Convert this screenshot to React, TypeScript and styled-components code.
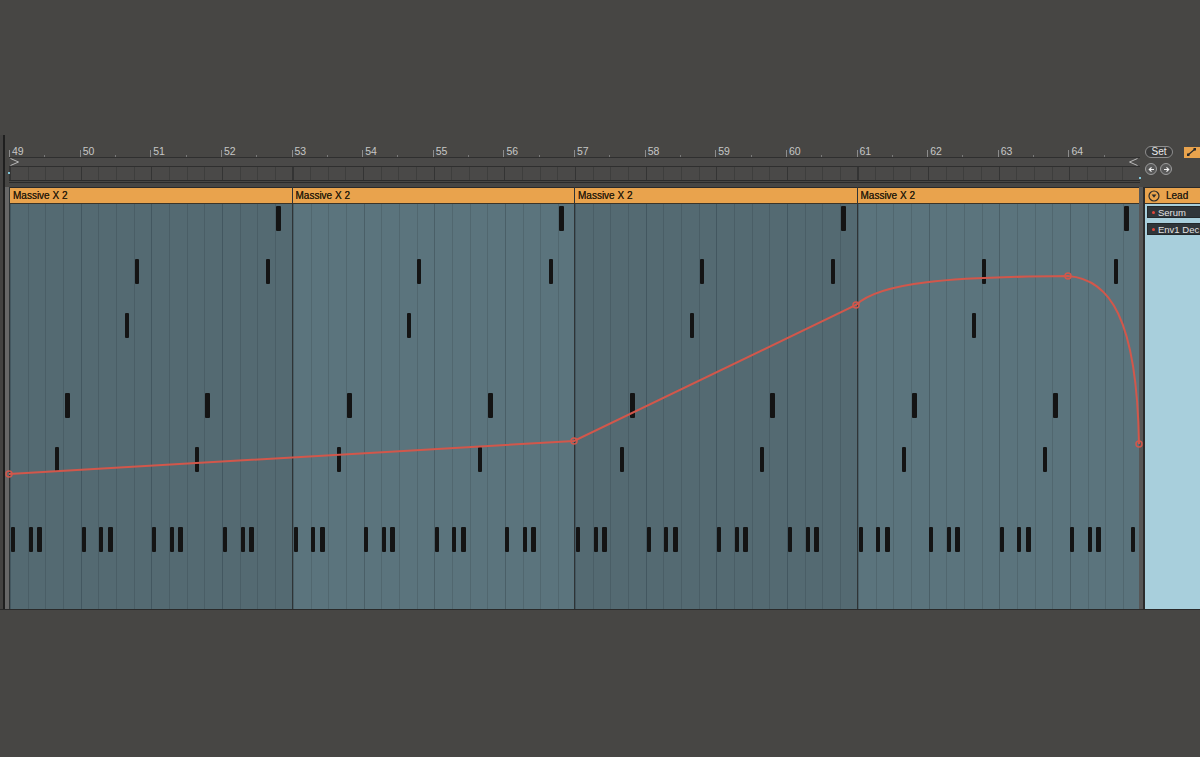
import React from 'react';
import styled, { createGlobalStyle } from 'styled-components';

const BAR_WIDTH = 70.625;
const BEAT_WIDTH = BAR_WIDTH / 4;
const ROW_TOP = [2, 55, 109, 189, 243, 323];

type Note = { x: number; row: number; w: number };
type Clip = { name: string; shade: 'dark' | 'light'; extra?: Note[] };

const baseNotes: Note[] = [
    { x: 266, row: 0, w: 5 },
    { x: 124.5, row: 1, w: 4 },
    { x: 256, row: 1, w: 4 },
    { x: 114.5, row: 2, w: 4 },
    { x: 54.5, row: 3, w: 5 },
    { x: 195, row: 3, w: 5 },
    { x: 44.5, row: 4, w: 4 },
    { x: 185, row: 4, w: 4 },
    ...[0, 1, 2, 3].flatMap((b) => [
        { x: b * BAR_WIDTH + 1, row: 5, w: 4 },
        { x: b * BAR_WIDTH + 18.7, row: 5, w: 4 },
        { x: b * BAR_WIDTH + 27, row: 5, w: 5 },
    ]),
];

const clips: Clip[] = [
    { name: 'Massive X 2', shade: 'dark' },
    { name: 'Massive X 2', shade: 'light' },
    { name: 'Massive X 2', shade: 'dark' },
    { name: 'Massive X 2', shade: 'light', extra: [{ x: 273.5, row: 5, w: 4 }] },
];

const bars = Array.from({ length: 16 }, (_, i) => 49 + i);

// automation breakpoints in lane coords (lane starts at x 9, y 187)
const autoPoints = [
    [0, 287],
    [565, 254],
    [847, 118],
    [1059, 89],
    [1130, 257],
];

const autoPath = 'M0,287 L565,254 L847,118 C871,95 941,90 1059,89 C1100,92 1128,130 1130,257';

const GlobalStyle = createGlobalStyle`
    html, body {
        margin: 0;
        padding: 0;
        background: #474644;
        overflow: hidden;
    }
    body {
        font-family: "Liberation Sans", Arial, sans-serif;
    }
`;

const Page = styled.div`
    width: 1200px;
    height: 757px;
    padding-top: 135px;
    box-sizing: border-box;
    display: flex;
    flex-direction: column;
    background: #474644;
`;

const RulerRow = styled.div`
    display: flex;
    height: 52px;
`;

const LaneRow = styled.div`
    display: flex;
    height: 423px;
`;

const EdgeStrip = styled.div<{ $lit?: boolean }>`
    width: 9px;
    flex-shrink: 0;
    background: linear-gradient(
        to right,
        #434241 0 3px,
        #1f1f1f 3px 5px,
        ${(p) => (p.$lit ? '#676767' : '#474644')} 5px 9px
    );
    ${(p) => p.$lit && 'border-bottom: 1px solid #2a2a2a; box-sizing: border-box;'}
`;

const RulerTrack = styled.div`
    width: 1133px;
    display: flex;
    flex-direction: column;
`;

const Numbers = styled.div`
    height: 22px;
    width: 1130px;
    display: flex;
`;

const BarCell = styled.div`
    flex: 1;
    position: relative;
    display: flex;
    align-items: flex-end;
    padding-left: 3px;
    padding-bottom: 1px;
    font-size: 10.5px;
    line-height: 10px;
    color: #c6c6c6;

    &::before {
        content: '';
        position: absolute;
        left: 0;
        bottom: 0;
        width: 1px;
        height: 7px;
        background: #8c8c8c;
    }

    &::after {
        content: '';
        position: absolute;
        left: 50%;
        bottom: 0;
        width: 1px;
        height: 2px;
        background: #7a7a7a;
    }
`;

const LoopStrip = styled.div`
    height: 8px;
    border-top: 1px solid #2f2f2f;
    border-bottom: 1px solid #2f2f2f;
    display: flex;
    justify-content: space-between;
    align-items: center;
    padding-left: 1px;
    background: #4a4948;
`;

const BeatStrip = styled.div`
    height: 13px;
    border-bottom: 1px solid #2b2b2b;
    background-color: #4a4948;
    background-image: repeating-linear-gradient(
            to right,
            #343434 0 1px,
            transparent 1px ${BAR_WIDTH}px
        ),
        repeating-linear-gradient(to right, #3e3e3d 0 1px, transparent 1px ${BEAT_WIDTH}px);
    background-position: 1px 0;
    position: relative;
`;

const Marker = styled.span<{ $right?: boolean }>`
    position: absolute;
    bottom: ${(p) => (p.$right ? '1px' : '6px')};
    ${(p) => (p.$right ? 'left: 1130px;' : 'left: -1px;')}
    width: 2px;
    height: 2px;
    background: #7fc4d8;
`;

const RulerGap = styled.div`
    margin-top: 1px;
    height: 4px;
    border-top: 1px solid #2b2b2b;
`;

const Controls = styled.div`
    margin-left: 3px;
    width: 55px;
    padding: 11px 0 0 2px;
    display: flex;
    flex-direction: column;
    gap: 5px;
    overflow: hidden;
`;

const ControlRow = styled.div<{ $gap: number }>`
    display: flex;
    align-items: center;
    gap: ${(p) => p.$gap}px;
`;

const SetButton = styled.div`
    width: 28px;
    height: 12px;
    box-sizing: border-box;
    border: 1px solid #8e8e8e;
    border-radius: 6px;
    background: #3a3a3a;
    color: #e8e8e8;
    font-size: 10px;
    line-height: 10px;
    text-align: center;
`;

const OrangeToggle = styled.div`
    width: 16px;
    height: 11px;
    flex-shrink: 0;
    background: #e9a34d;
    display: flex;
    align-items: center;
    padding-left: 3px;
    box-sizing: border-box;
`;

const RoundButton = styled.div`
    width: 12px;
    height: 12px;
    box-sizing: border-box;
    border-radius: 50%;
    border: 1px solid #9c9c9c;
    background: #585858;
    display: flex;
    align-items: center;
    justify-content: center;
`;

const Lane = styled.div`
    width: 1130px;
    display: flex;
    position: relative;
    border-bottom: 1px solid #2a2a2a;
    box-sizing: border-box;
`;

const ClipBox = styled.div`
    flex: 1;
    display: flex;
    flex-direction: column;
    border-left: 1px solid #2f3436;
    min-width: 0;
`;

const ClipHeader = styled.div`
    height: 15px;
    border-top: 1px solid #2a2a2a;
    border-bottom: 1px solid #3a3428;
    background: #e9a34d;
    color: #2c1f0c;
    font-size: 10px;
    line-height: 15px;
    padding-left: 3px;
    white-space: nowrap;
    overflow: hidden;
    text-shadow: 0 0 0.4px #2c1f0c;
`;

const ClipBody = styled.div<{ $shade: 'dark' | 'light' }>`
    flex: 1;
    position: relative;
    background-color: ${(p) => (p.$shade === 'dark' ? '#546a72' : '#5b747d')};
    background-image: repeating-linear-gradient(
            to right,
            ${(p) => (p.$shade === 'dark' ? '#435760' : '#4a5f67')} 0 1px,
            transparent 1px ${BAR_WIDTH}px
        ),
        repeating-linear-gradient(
            to right,
            ${(p) => (p.$shade === 'dark' ? '#4a5e66' : '#51676f')} 0 1px,
            transparent 1px ${BEAT_WIDTH}px
        );
`;

const NoteBlock = styled.div.attrs<{ $x: number; $top: number; $w: number }>((p) => ({
    style: { left: `${p.$x}px`, top: `${p.$top}px`, width: `${p.$w}px` },
}))<{ $x: number; $top: number; $w: number }>`
    position: absolute;
    height: 25px;
    background: #141414;
    border-radius: 1px;
`;

const AutomationLayer = styled.svg`
    position: absolute;
    left: 0;
    top: 0;
    overflow: visible;
    pointer-events: none;
`;

const Divider = styled.div`
    width: 6px;
    flex-shrink: 0;
    background: linear-gradient(to right, #575757 0 4px, #2c2c2c 4px 6px);
    border-bottom: 1px solid #2a2a2a;
    box-sizing: border-box;
`;

const TrackPanel = styled.div`
    width: 55px;
    background: #a8cfdc;
    display: flex;
    flex-direction: column;
    border-bottom: 1px solid #2a2a2a;
    box-sizing: border-box;
    overflow: hidden;
`;

const TrackHeader = styled.div`
    height: 15px;
    border-top: 1px solid #2a2a2a;
    border-bottom: 1px solid #3a3428;
    background: #e9a34d;
    display: flex;
    align-items: center;
    gap: 6px;
    padding-left: 3px;
    color: #2e2414;
    font-size: 10px;
    white-space: nowrap;
    text-shadow: 0 0 0.4px #2e2414;
`;

const DeviceList = styled.div`
    display: flex;
    flex-direction: column;
    gap: 5px;
    padding: 2px 0 0 2px;
`;

const DeviceChip = styled.div`
    height: 12px;
    box-sizing: border-box;
    background: #30363a;
    border: 1px solid #22282b;
    border-right: none;
    display: flex;
    align-items: center;
    gap: 3px;
    padding-left: 4px;
    color: #e2e2e2;
    font-size: 9.5px;
    white-space: nowrap;
    overflow: hidden;

    &::before {
        content: '';
        width: 3px;
        height: 3px;
        border-radius: 50%;
        background: #e2473c;
        flex-shrink: 0;
    }
`;

const LoopStart = () => (
    <svg width="10" height="8" viewBox="0 0 10 8">
        <path d="M0.5 0.5 L8.5 4 L0.5 7.5" fill="none" stroke="#b9b9b9" strokeWidth="1" />
    </svg>
);

const LoopEnd = () => (
    <svg width="10" height="8" viewBox="0 0 10 8" style={{ marginRight: '2px' }}>
        <path d="M9.5 0.5 L1.5 4 L9.5 7.5" fill="none" stroke="#b9b9b9" strokeWidth="1" />
    </svg>
);

const Arrow = ({ dir }: { dir: 'left' | 'right' }) => (
    <svg width="7" height="7" viewBox="0 0 7 7">
        {dir === 'left' ? (
            <path d="M6 3.5 H1.5 M3.5 1.3 L1.3 3.5 L3.5 5.7" stroke="#f2f2f2" strokeWidth="1.2" fill="none" />
        ) : (
            <path d="M1 3.5 H5.5 M3.5 1.3 L5.7 3.5 L3.5 5.7" stroke="#f2f2f2" strokeWidth="1.2" fill="none" />
        )}
    </svg>
);

const FoldIcon = () => (
    <svg width="12" height="12" viewBox="0 0 12 12">
        <circle cx="6" cy="6" r="5" fill="none" stroke="#2a2a2a" strokeWidth="1.2" />
        <path d="M3.6 4.6 H8.4 L6 7.8 Z" fill="#2a2a2a" />
    </svg>
);

const ExpandIcon = () => (
    <svg width="9" height="8" viewBox="0 0 9 8">
        <path d="M1.5 6.5 L7.5 1.5" stroke="#2a2a2a" strokeWidth="1.3" />
        <rect x="0" y="5.5" width="2.5" height="2.5" fill="#2a2a2a" />
        <rect x="6.5" y="0" width="2.5" height="2.5" fill="#2a2a2a" />
    </svg>
);

export default function App() {
    return (
        <>
            <GlobalStyle />
            <Page>
                <RulerRow>
                    <EdgeStrip />
                    <RulerTrack>
                        <Numbers>
                            {bars.map((b) => (
                                <BarCell key={b}>{b}</BarCell>
                            ))}
                        </Numbers>
                        <LoopStrip>
                            <LoopStart />
                            <LoopEnd />
                        </LoopStrip>
                        <BeatStrip>
                            <Marker />
                            <Marker $right />
                        </BeatStrip>
                        <RulerGap />
                    </RulerTrack>
                    <Controls>
                        <ControlRow $gap={11}>
                            <SetButton>Set</SetButton>
                            <OrangeToggle>
                                <ExpandIcon />
                            </OrangeToggle>
                        </ControlRow>
                        <ControlRow $gap={3}>
                            <RoundButton>
                                <Arrow dir="left" />
                            </RoundButton>
                            <RoundButton>
                                <Arrow dir="right" />
                            </RoundButton>
                        </ControlRow>
                    </Controls>
                </RulerRow>
                <LaneRow>
                    <EdgeStrip $lit />
                    <Lane>
                        {clips.map((clip, i) => (
                            <ClipBox key={i}>
                                <ClipHeader>{clip.name}</ClipHeader>
                                <ClipBody $shade={clip.shade}>
                                    {[...baseNotes, ...(clip.extra ?? [])].map((n, j) => (
                                        <NoteBlock key={j} $x={n.x} $top={ROW_TOP[n.row]} $w={n.w} />
                                    ))}
                                </ClipBody>
                            </ClipBox>
                        ))}
                        <AutomationLayer width="1130" height="422" viewBox="0 0 1130 422">
                            <path d={autoPath} fill="none" stroke="#d2574b" strokeWidth="2" />
                            {autoPoints.map(([x, y], i) => (
                                <circle key={i} cx={x} cy={y} r="3" fill="none" stroke="#d2574b" strokeWidth="1.5" />
                            ))}
                        </AutomationLayer>
                    </Lane>
                    <Divider />
                    <TrackPanel>
                        <TrackHeader>
                            <FoldIcon />
                            Lead
                        </TrackHeader>
                        <DeviceList>
                            <DeviceChip>Serum</DeviceChip>
                            <DeviceChip>Env1 Dec</DeviceChip>
                        </DeviceList>
                    </TrackPanel>
                </LaneRow>
            </Page>
        </>
    );
}
